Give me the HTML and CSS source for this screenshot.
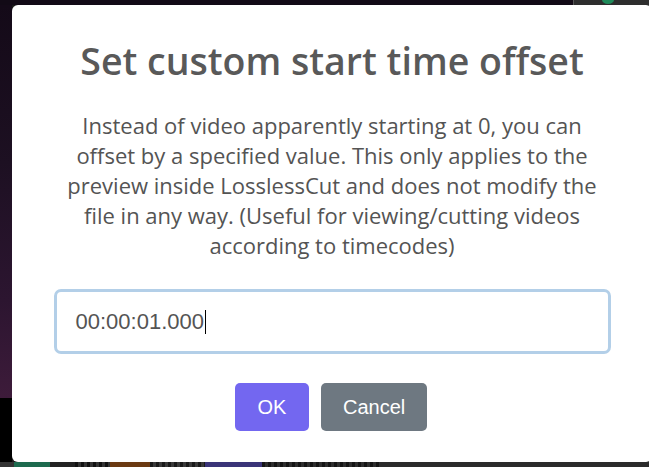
FILE: index.html
```html
<!DOCTYPE html>
<html lang="en">
<head>
<meta charset="utf-8">
<title>Set custom start time offset</title>
<link rel="stylesheet" href="styles.css">
</head>
<body>
<div class="app">
  <div class="topbar">
    <div class="top-dark"></div>
    <div class="top-gray"><span class="dot"></span></div>
  </div>
  <div class="side">
    <div class="side-purple"></div>
    <div class="side-black"></div>
  </div>
  <div class="stage"></div>
  <div class="timeline">
    <div class="seg seg-gray"></div>
    <div class="seg seg-green"></div>
    <div class="seg seg-dark"></div>
    <div class="seg seg-stripes"></div>
    <div class="seg seg-orange"></div>
    <div class="seg seg-stripes2"></div>
    <div class="seg seg-purple"></div>
    <div class="seg seg-stripes3"></div>
    <div class="seg seg-rest"></div>
  </div>
</div>

<div class="modal" role="dialog">
  <h2 class="title">Set custom start time offset</h2>
  <div class="text">Instead of video apparently starting at 0, you can<br>offset by a specified value. This only applies to the<br>preview inside LosslessCut and does not modify the<br>file in any way. (Useful for viewing/cutting videos<br>according to timecodes)</div>
  <div class="input"><span class="value">00:00:01.000</span><span class="caret"></span></div>
  <div class="actions">
    <button class="btn btn-ok">OK</button>
    <button class="btn btn-cancel">Cancel</button>
  </div>
</div>
</body>
</html>
```

FILE: styles.css
```css
html, body {
  margin: 0;
  padding: 0;
  width: 649px;
  height: 467px;
  overflow: hidden;
  background: #150c18;
}

.app {
  display: grid;
  grid-template-rows: 5px 1fr 5px;
  grid-template-columns: 12px 1fr;
  width: 649px;
  height: 467px;
}

.topbar {
  grid-column: 1 / 3;
  display: flex;
}
.top-dark {
  width: 573px;
  background: #120a16;
}
.top-gray {
  flex: 1;
  background: #2e2e2e;
  border-left: 1px solid #555;
  position: relative;
}
.dot {
  position: absolute;
  left: 28px;
  top: -4px;
  width: 12px;
  height: 8px;
  border-radius: 50%;
  background: #1f8a5a;
}

.side {
  display: flex;
  flex-direction: column;
}
.side-purple {
  height: 393px;
  background: linear-gradient(180deg, #140a18 0%, #1d1022 40%, #2c1530 75%, #3d1b3a 100%);
}
.side-black {
  flex: 1;
  background: #000;
}

.stage {
  background: #1a1a1a;
}

.timeline {
  grid-column: 1 / 3;
  display: flex;
  background: #2a2a2a;
}
.seg { height: 100%; }
.seg-gray { width: 14px; background: #333; }
.seg-green { width: 36px; background: #1d6a4e; }
.seg-dark { width: 25px; background: #222; }
.seg-stripes { width: 35px; background: repeating-linear-gradient(90deg, #111 0 3px, #333 3px 6px); }
.seg-orange { width: 40px; background: #6b3a12; }
.seg-stripes2 { width: 55px; background: repeating-linear-gradient(90deg, #1a1a1a 0 3px, #3a3a3a 3px 6px); }
.seg-purple { width: 57px; background: #3a3478; }
.seg-stripes3 { width: 118px; background: repeating-linear-gradient(90deg, #151515 0 3px, #2e2e2e 3px 6px); }
.seg-rest { flex: 1; background: #2b2b2b; }

.modal {
  position: absolute;
  left: 12px;
  top: 5px;
  width: 640px;
  height: 457px;
  box-sizing: border-box;
  background: #fff;
  border-radius: 6px;
  padding-top: 33px;
  display: flex;
  flex-direction: column;
  align-items: center;
  font-family: "Open Sans", "Noto Sans", sans-serif;
}

.title {
  margin: 0;
  font-size: 37.5px;
  font-weight: 600;
  line-height: 45px;
  color: #595959;
  text-align: center;
}

.text {
  margin-top: 27px;
  font-size: 22px;
  line-height: 30px;
  color: #545454;
  text-align: center;
  white-space: nowrap;
}

.input {
  margin-top: 29px;
  width: 557px;
  height: 65px;
  box-sizing: border-box;
  border: 3px solid #b3cfe8;
  border-radius: 7px;
  display: flex;
  align-items: center;
  padding-left: 19px;
  font-family: "Liberation Sans", Arial, sans-serif;
  font-size: 22px;
  color: #545454;
}
.caret {
  width: 1px;
  height: 24px;
  background: #000;
  margin-left: 1px;
}

.actions {
  margin-top: 29px;
  margin-right: 2px;
  display: flex;
  gap: 12px;
}

.btn {
  height: 48px;
  border: 0;
  border-radius: 5px;
  padding: 0 22px;
  font-family: "Liberation Sans", Arial, sans-serif;
  font-size: 20px;
  color: #fff;
}
.btn-ok {
  width: 74px;
  background: #7367f0;
}
.btn-cancel {
  width: 106px;
  background: #6e7881;
}
```
